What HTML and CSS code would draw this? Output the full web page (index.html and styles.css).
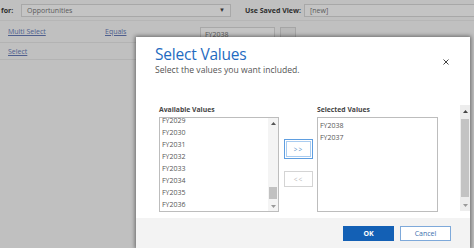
FILE: index.html
```html
<!DOCTYPE html>
<html>
<head>
<meta charset="utf-8">
<link rel="stylesheet" href="styles.css">
</head>
<body>
<div class="page">
  <div class="topbar">
    <span class="lbl lbl-for">for:</span>
    <div class="sel sel-entity"><span>Opportunities</span><span class="caret">&#9660;</span></div>
    <span class="lbl lbl-view">Use Saved View:</span>
    <div class="sel sel-view"><span>[new]</span></div>
  </div>
  <div class="row row-one">
    <a class="link link-field">Multi Select</a>
    <a class="link link-op">Equals</a>
    <div class="val">FY2038</div>
    <div class="val-btn"></div>
  </div>
  <div class="row row-two">
    <a class="link link-field">Select</a>
  </div>
</div>

<div class="dlg">
  <div class="dlg-head">
    <div class="dlg-titles">
      <div class="dlg-title">Select Values</div>
      <div class="dlg-sub">Select the values you want included.</div>
    </div>
    <svg class="dlg-close" width="6" height="6" viewBox="0 0 6 6"><path d="M0.5 0.5 L5.5 5.5 M5.5 0.5 L0.5 5.5" stroke="#444" stroke-width="1" fill="none"/></svg>
  </div>
  <div class="dlg-body">
    <div class="cols">
      <div class="col col-avail">
        <div class="col-lbl">Available Values</div>
        <div class="lst lst-avail">
          <div class="lst-items lst-items-avail">
            <div class="itm">FY2029</div>
            <div class="itm">FY2030</div>
            <div class="itm">FY2031</div>
            <div class="itm">FY2032</div>
            <div class="itm">FY2033</div>
            <div class="itm">FY2034</div>
            <div class="itm">FY2035</div>
            <div class="itm">FY2036</div>
          </div>
          <div class="sb">
            <div class="sb-arrow"><svg width="5" height="3" viewBox="0 0 5 3"><path d="M0 3 L2.5 0 L5 3 Z" fill="#555"/></svg></div>
            <div class="sb-track"><div class="sb-thumb"></div></div>
            <div class="sb-arrow"><svg width="5" height="3" viewBox="0 0 5 3"><path d="M0 0 L2.5 3 L5 0 Z" fill="#999"/></svg></div>
          </div>
        </div>
      </div>
      <div class="col col-btns">
        <div class="mv mv-add">&gt;&gt;</div>
        <div class="mv mv-rem">&lt;&lt;</div>
      </div>
      <div class="col col-sel">
        <div class="col-lbl">Selected Values</div>
        <div class="lst lst-sel">
          <div class="lst-items lst-items-sel">
            <div class="itm">FY2038</div>
            <div class="itm">FY2037</div>
          </div>
        </div>
      </div>
    </div>
    <div class="vsb">
      <div class="vsb-arrow"><svg width="5" height="3" viewBox="0 0 5 3"><path d="M0 3 L2.5 0 L5 3 Z" fill="#444"/></svg></div>
      <div class="vsb-thumb"></div>
      <div class="vsb-arrow"><svg width="5" height="3" viewBox="0 0 5 3"><path d="M0 0 L2.5 3 L5 0 Z" fill="#999"/></svg></div>
    </div>
  </div>
  <div class="dlg-foot">
    <div class="fbtn fbtn-ok">OK</div>
    <div class="fbtn fbtn-cancel">Cancel</div>
  </div>
</div>
</body>
</html>
```

FILE: styles.css
```css
* { box-sizing: border-box; }
html, body { margin: 0; padding: 0; }
body {
  width: 474px;
  height: 248px;
  overflow: hidden;
  position: relative;
  background: #c0c0c0;
  font-family: "Open Sans", "Noto Sans", sans-serif;
  color: #333;
}

/* background page (under the modal overlay) */
.page { width: 474px; }
.topbar {
  height: 21px;
  display: flex;
  align-items: center;
  border-bottom: 1px solid #b6b6b6;
  font-size: 7px;
}
.lbl { font-weight: bold; color: #2e2e2e; white-space: nowrap; }
.lbl-for { width: 21px; padding-left: 1px; }
.sel {
  height: 13px;
  display: flex;
  align-items: center;
  justify-content: space-between;
  background: #c4c4c4;
  border: 1px solid #a8a8a8;
  padding: 0 5px;
  color: #5a5a5a;
}
.sel-entity { width: 210px; }
.caret { font-size: 6px; color: #333; }
.lbl-view { margin-left: 14px; width: 59px; }
.sel-view { flex: 1; margin-right: -4px; justify-content: flex-start; }

.row {
  display: flex;
  align-items: center;
  border-bottom: 1px solid #b3b3b3;
  font-size: 7px;
  width: 300px;
}
.row-one { height: 22px; }
.row-two { height: 17px; }
.link { color: #4f5f8e; text-decoration: underline; }
.link-field { margin-left: 8px; width: 97px; }
.link-op { width: 95px; }
.val {
  width: 75px;
  height: 15px;
  margin-top: 6px;
  align-self: flex-start;
  background: #c4c4c4;
  border: 1px solid #a8a8a8;
  color: #5a5a5a;
  padding: 2px 4px;
  line-height: 10px;
}
.val-btn {
  width: 16px;
  height: 15px;
  margin-top: 6px;
  margin-left: 5px;
  align-self: flex-start;
  background: #b9b9b9;
  border: 1px solid #a5a5a5;
}

/* modal dialog */
.dlg {
  position: absolute;
  left: 136px;
  top: 37px;
  width: 334px;
  height: 211px;
  background: #fff;
  box-shadow: 0 0 4px 1px rgba(0, 0, 0, 0.45);
  display: flex;
  flex-direction: column;
}
.dlg-head {
  display: flex;
  justify-content: space-between;
  align-items: flex-start;
  padding: 7px 21px 0 19px;
  height: 68px;
  flex: none;
}
.dlg-title {
  font-size: 15.5px;
  line-height: 20px;
  color: #1f6bc1;
  letter-spacing: -0.2px;
}
.dlg-sub {
  font-size: 8.6px;
  line-height: 12px;
  margin-top: 0px;
  color: #555;
}
.dlg-close { margin-top: 15px; }

.dlg-body {
  display: flex;
  height: 113px;
  flex: none;
}
.cols {
  flex: 1;
  display: flex;
  padding-left: 23px;
  padding-top: 0;
}
.col { display: flex; flex-direction: column; }
.col-avail { width: 120px; }
.col-sel { width: 121px; margin-left: 4px; }
.col-lbl {
  font-size: 6.8px;
  font-weight: bold;
  line-height: 10px;
  height: 12px;
  padding-top: 0;
  color: #444;
}
.lst {
  height: 95px;
  border: 1px solid #bdbdbd;
  display: flex;
  overflow: hidden;
  font-size: 7px;
  color: #555;
}
.lst-items { flex: 1; padding-left: 2px; }
.lst-items-avail { margin-top: -3px; }
.lst-items-sel { padding-top: 2px; }
.itm { line-height: 12px; height: 12px; }

.sb {
  width: 10px;
  display: flex;
  flex-direction: column;
  background: #f4f4f4;
}
.sb-arrow { height: 10px; display: flex; align-items: center; justify-content: center; }
.sb-track { flex: 1; display: flex; flex-direction: column; justify-content: flex-end; }
.sb-thumb { height: 12px; margin: 0 1px 2px; background: #c1c1c1; }

.col-btns { width: 29px; margin-left: 5px; }
.mv {
  height: 20px;
  display: flex;
  align-items: center;
  justify-content: center;
  font-size: 6.5px;
  letter-spacing: 1px;
}
.mv-add {
  margin-top: 34px;
  border: 1px solid #5f9ee0;
  box-shadow: inset 0 0 0 1px #fff, inset 0 0 0 2px #a9ccf0;
  color: #5a8fc8;
}
.mv-rem {
  margin-top: 12px;
  height: 16px;
  border: 1px solid #d4d4d4;
  color: #bbb;
}

.vsb {
  width: 10px;
  height: 106px;
  display: flex;
  flex-direction: column;
  background: #ededed;
}
.vsb-arrow { height: 12px; display: flex; align-items: center; justify-content: center; }
.vsb-thumb { flex: 1; margin: 2px 1px; background: #c3c3c3; }

.dlg-foot {
  flex: 1;
  background: #f3f3f3;
  display: flex;
  justify-content: flex-end;
  align-items: flex-start;
  padding: 8px 19px 0 0;
  gap: 6px;
}
.fbtn {
  width: 51px;
  height: 15px;
  display: flex;
  align-items: center;
  justify-content: center;
  font-size: 7px;
}
.fbtn-ok {
  background: #1360b5;
  color: #fff;
  font-weight: bold;
}
.fbtn-cancel {
  background: #fff;
  border: 1px solid #7ea9da;
  color: #3b6fae;
}
```
